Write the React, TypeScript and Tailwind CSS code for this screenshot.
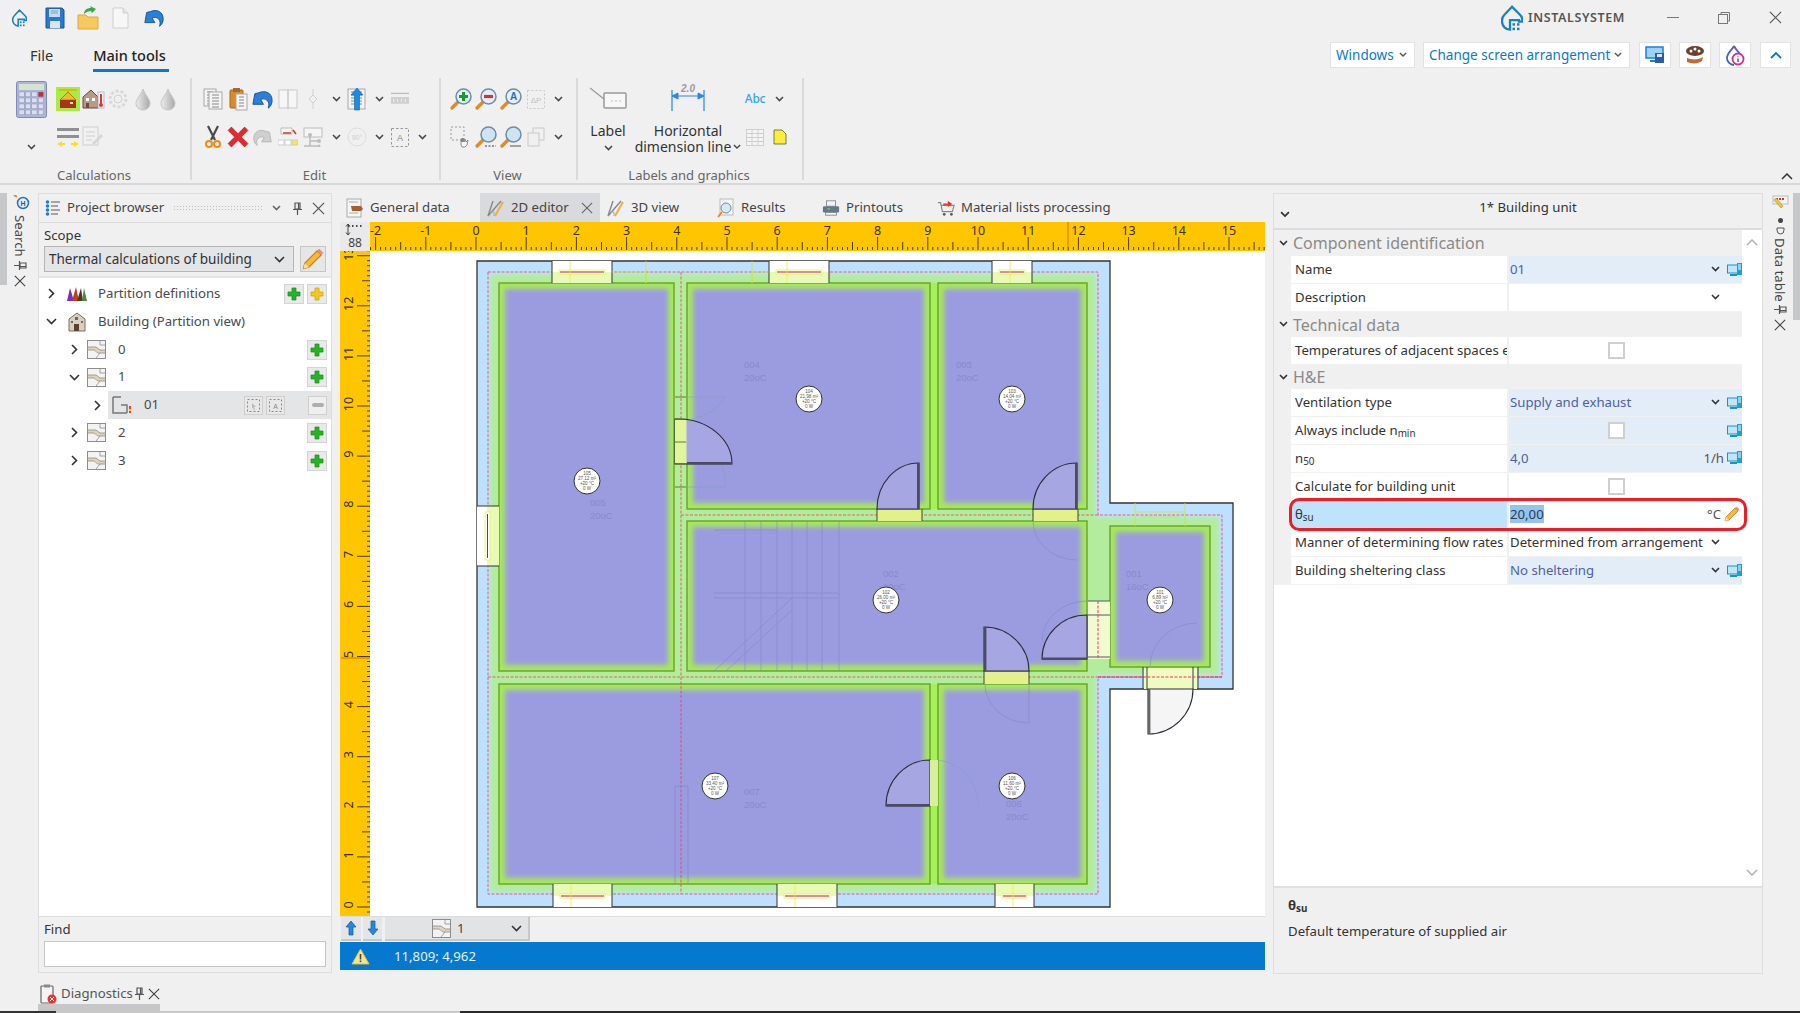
import React from "react";

const Chev = ({ c = "#4a4a4a", w = 9 }: { c?: string; w?: number }) => (
  <svg width={w} height={w * 0.67} viewBox="0 0 9 6" fill="none" className="shrink-0">
    <path d="M1 1l3.5 3.5L8 1" stroke={c} strokeWidth="1.6" />
  </svg>
);
const ChevR = () => (
  <svg width="7" height="11" viewBox="0 0 7 11" fill="none"><path d="M1 1l4.5 4.5L1 10" stroke="#333" strokeWidth="1.6" /></svg>
);
const ChevD = () => (
  <svg width="11" height="7" viewBox="0 0 11 7" fill="none"><path d="M1 1l4.5 4.5L10 1" stroke="#333" strokeWidth="1.6" /></svg>
);
const Cross = ({ s = 14, c = "#555" }: { s?: number; c?: string }) => (
  <svg width={s} height={s} viewBox="0 0 14 14" fill="none"><path d="M1 1l12 12M13 1L1 13" stroke={c} strokeWidth="1.3" /></svg>
);
const Pin = ({ r = false }: { r?: boolean }) => (
  <svg width="11" height="13" viewBox="0 0 11 13" fill="none" className={r ? "rotate-90" : ""}>
    <path d="M3 1h5v6H3zM1 7.5h9M5.5 8v5M6.5 1v6" stroke="#555" strokeWidth="1.2" />
  </svg>
);
const Drop = () => (
  <svg width="20" height="24" viewBox="0 0 20 24">
    <defs><linearGradient id="dg" x1="0" x2="1"><stop offset="0" stopColor="#ededed" /><stop offset="1" stopColor="#a8a8a8" /></linearGradient></defs>
    <path d="M10 2C8 8 3 12 3 16.5a7 6.5 0 0 0 14 0C17 12 12 8 10 2z" fill="url(#dg)" stroke="#c4c4c4" />
  </svg>
);
const Doc = ({ x = 0, y = 0, w = 14, h = 18, f = "#f4f4f4", s = "#a8a8a8" }: any) => (
  <g>
    <rect x={x} y={y} width={w} height={h} fill={f} stroke={s} />
    {[3, 6, 9, 12, 15].filter((l) => l < h - 1).map((l) => <path key={l} d={`M${x + 3} ${y + l}h${w - 6}`} stroke="#888" strokeWidth="1" />)}
  </g>
);
const I = ({ s = 24, children }: { s?: number; children: React.ReactNode }) => (
  <svg width={s} height={s} viewBox="0 0 24 24" fill="none" className="shrink-0">{children}</svg>
);
const Undo = ({ s = 24, flip = false, c = "#2a7fd6", d = "#14529c" }: any) => (
  <svg width={s} height={s} viewBox="0 0 24 24" fill="none" className={flip ? "-scale-x-100 shrink-0" : "shrink-0"}>
    <path d="M8 5c7-3 14 0 14 8 0 3-1 6-4 8 1-3 1-6-1-8-2-2-5-2-7-1l3 5H2L4 6z" fill={c} stroke={d} strokeWidth="1" />
  </svg>
);
const HomeDrop = ({ s = 22 }: { s?: number }) => (
  <svg width={s} height={s * 1.2} viewBox="0 0 22 26" fill="none" className="shrink-0">
    <path d="M11 1.5L3 10C1 12 1 14 1 16c0 5 4 8.5 8 8.5V15h9v1.5h3.5V16c0-2 0-4-2-6z" fill="none" stroke="#1a82c4" strokeWidth="2.3" />
    <rect x="11.5" y="18" width="2.5" height="2.5" fill="#1a82c4" /><rect x="16" y="18" width="2.5" height="2.5" fill="#1a82c4" />
    <rect x="11.5" y="22.5" width="2.5" height="2.5" fill="#1a82c4" /><rect x="16" y="22.5" width="2.5" height="2.5" fill="#1a82c4" />
  </svg>
);
const Plus = ({ c = "#27b327" }: { c?: string }) => (
  <div className="flex size-[20px] items-center justify-center border border-[#d4d4d4] bg-[#e9e9e9]">
    <svg width="14" height="14" viewBox="0 0 14 14"><path d="M5 1h4v4h4v4H9v4H5V9H1V5h4z" fill={c} stroke={c === "#27b327" ? "#178a17" : "#c9a200"} strokeWidth=".7" /></svg>
  </div>
);
const Floor = ({ s = 19 }: { s?: number }) => (
  <svg width={s} height={s} viewBox="0 0 19 19" className="shrink-0">
    <rect x=".5" y=".5" width="18" height="18" fill="#f3f3f3" stroke="#8d8d8d" />
    <path d="M1 7h8l4 3h5v3h-6l-4-3H1z" fill="#dfd3b4" />
    <path d="M1 7h8l4 3h5M1 10h6l4 3h7M13 1v4l5 0M9 18l4-5" stroke="#8d8d8d" fill="none" strokeWidth=".8" />
  </svg>
);
const Monitor = () => (
  <svg width="15" height="14" viewBox="0 0 15 14" className="shrink-0">
    <rect x=".5" y="2" width="11" height="8" fill="#bfe6f7" stroke="#1693c9" />
    <path d="M3 12h7" stroke="#1693c9" strokeWidth="2" />
    <rect x="10" y="0" width="5" height="12" fill="#1f9ed4" /><path d="M11 2h3M11 4h3M11 6h3" stroke="#fff" />
  </svg>
);
const Pencil = ({ s = 16 }: { s?: number }) => (
  <svg width={s} height={s} viewBox="0 0 16 16" className="shrink-0">
    <path d="M1 15l1-4L11 2l3 3-9 9z" fill="#f6b73c" stroke="#c47f17" strokeWidth=".8" />
    <path d="M11 2l1.5-1.5 3 3L14 5z" fill="#e98a8a" /><path d="M1 15l1-4 3 3z" fill="#f4dfb5" />
  </svg>
);
const Box = () => <div className="size-[17px] border-2 border-[#cfcfcf] bg-white" />;

const CalcIcon = () => (
  <svg width="31" height="37" viewBox="0 0 31 37" className="shrink-0">
    <rect x=".5" y=".5" width="30" height="36" rx="2" fill="#aeb6d8" stroke="#8189b4" />
    <rect x="3" y="3" width="25" height="6" fill="#d7e4cd" />
    {[0, 1, 2, 3].map((r) => [0, 1, 2, 3].map((c) => (
      <rect key={`${r}${c}`} x={3 + c * 6.4} y={11 + r * 6} width="5.2" height="4.8" fill={r === 0 && c === 3 ? "#c23030" : "#dadff0"} stroke="#7e86ad" strokeWidth=".4" />
    )))}
  </svg>
);

const Cell = ({ w = 25, children }: { w?: number; children?: React.ReactNode }) => (
  <div className="flex h-[26px] shrink-0 items-center justify-center" style={{ width: w }}>{children}</div>
);

const Mag = ({ kind }: { kind: "plus" | "minus" | "a" | "plain" | "sel" | "sel2" }) => (
  <I s={24}>
    <path d="M10 14l-7 7" stroke="#e08a28" strokeWidth="3.4" strokeLinecap="round" />
    <circle cx="14.5" cy="9.5" r="7.5" fill={kind === "plain" || kind === "sel" || kind === "sel2" ? "#cfe3f2" : "#e3eff6"} stroke="#6e8ca3" strokeWidth="1.5" />
    {kind === "plus" && <path d="M14.5 5v9M10 9.5h9" stroke="#1a9a2e" strokeWidth="3" />}
    {kind === "minus" && <path d="M10 9.5h9" stroke="#d03040" strokeWidth="3.2" />}
    {kind === "a" && <text x="14.5" y="13" textAnchor="middle" fontSize="10" fontWeight="700" fill="#2a6cc4" fontFamily="Liberation Sans">A</text>}
    {kind === "sel" && <path d="M11 21h11" stroke="#777" strokeWidth="1.3" strokeDasharray="2 1.5" />}
    {kind === "sel2" && <path d="M11 21h11" stroke="#888" strokeWidth="1.5" />}
  </I>
);

const ribbonG1 = (
  <div className="flex h-[64px] pl-4">
    <div className="flex w-[31px] flex-col items-center">
      <div className="-mt-[5px]"><CalcIcon /></div>
      <div className="mt-[26px]"><Chev /></div>
    </div>
    <div className="ml-[8px] flex flex-col gap-[12px]">
      <div className="flex">
        <Cell>
          <svg width="24" height="24" viewBox="0 0 24 24" className="bg-[#a9ea43]">
            <path d="M3 3h18M12 3v3" stroke="#d9b400" strokeWidth="1.5" /><path d="M4 13l8-8 8 8z" fill="#e7c02f" stroke="#b88000" />
            <rect x="4" y="13" width="16" height="8" fill="#a9321f" /><rect x="14" y="15" width="3" height="2" fill="#f4e1a0" />
          </svg>
        </Cell>
        <Cell>
          <I>
            <path d="M2 10l8-7 7 7v11H2z" fill="#b79b86" stroke="#5f4a3c" /><rect x="5" y="11" width="3" height="3" fill="#fff" /><rect x="11" y="11" width="3" height="3" fill="#fff" />
            <rect x="5" y="16" width="3" height="5" fill="#6f4a36" />
            <rect x="17" y="5" width="6" height="16" fill="#f2f4f8" stroke="#b4bac8" /><path d="M20 7v10" stroke="#d43a3a" strokeWidth="2" /><circle cx="20" cy="18" r="2" fill="#d43a3a" />
          </I>
        </Cell>
        <Cell>
          <I><circle cx="12" cy="12" r="8" fill="none" stroke="#d9d9d9" strokeWidth="3" strokeDasharray="3 2" /><circle cx="12" cy="12" r="4" fill="#efefef" stroke="#d0d0d0" /></I>
        </Cell>
        <Cell><Drop /></Cell>
        <Cell><Drop /></Cell>
      </div>
      <div className="flex">
        <Cell>
          <I>
            <rect x="1" y="3" width="22" height="3" fill="#909090" /><rect x="1" y="10" width="22" height="3" fill="#909090" />
            <path d="M1 19l5-3v2h3v2H6v2zM23 19l-5-3v2h-3v2h3v2z" fill="#f6e11d" />
          </I>
        </Cell>
        <Cell>
          <I><rect x="2" y="2" width="15" height="18" fill="#f1f1f1" stroke="#cfcfcf" /><path d="M5 7h9M5 11h9M5 15h6" stroke="#cfcfcf" /><path d="M11 18l9-9 2 2-9 9z" fill="#d6d6d6" /></I>
        </Cell>
      </div>
    </div>
  </div>
);

const Group = ({ w, label, children }: { w: number; label: string; children: React.ReactNode }) => (
  <div className="flex h-full shrink-0 flex-col pt-[14px]" style={{ width: w }}>
    {children}
    <div className="mt-[17px] h-4 pr-[2px] text-center text-[13px] leading-4 text-[#666]">{label}</div>
  </div>
);
const Sep = () => <div className="mt-[6px] h-[102px] w-[2px] shrink-0 bg-[#dadada]" />;

const ribbonG2 = (
  <div className="flex h-[64px] flex-col gap-[12px] pl-2">
    <div className="flex">
      <Cell><svg width="20" height="22" viewBox="0 0 20 22"><Doc x={1} y={1} w={12} h={17} /><Doc x={6} y={4} w={13} h={17} /></svg></Cell>
      <Cell><svg width="20" height="24" viewBox="0 0 20 24"><rect x="2" y="3" width="13" height="18" rx="1" fill="#d88a2c" stroke="#a9651a" /><rect x="5" y="1" width="7" height="4" fill="#9a6a3a" /><Doc x={8} y={7} w={11} h={16} /></svg></Cell>
      <Cell><Undo s={23} /></Cell>
      <Cell><svg width="20" height="20" viewBox="0 0 20 20"><rect x="1" y="1" width="18" height="18" fill="#f6f6f6" stroke="#c9c9c9" /><path d="M10 0v20" stroke="#c9c9c9" strokeWidth="1.5" /></svg></Cell>
      <Cell><svg width="12" height="20" viewBox="0 0 12 20"><path d="M6 0v6M6 14v6" stroke="#d0d0d0" /><path d="M6 6l4 4-4 4-4-4z" fill="none" stroke="#d0d0d0" /></svg></Cell>
      <Cell w={22}><Chev /></Cell>
      <Cell w={20}>
        <svg width="20" height="24" viewBox="0 0 20 24"><Doc x={1} y={2} w={17} h={20} /><path d="M10 1l6 7h-3.5v15h-5V8H4z" fill="#1b8de0" stroke="#0f62ab" strokeWidth=".6" /></svg>
      </Cell>
      <Cell w={24}><Chev /></Cell>
      <Cell w={18}><svg width="19" height="14" viewBox="0 0 19 14"><path d="M0 1h19" stroke="#aaa" /><rect x="0" y="5" width="19" height="7" fill="#cfcfcf" /><path d="M3 7v3M7 7v3M11 7v3M15 7v3" stroke="#f5f5f5" /></svg></Cell>
    </div>
    <div className="flex">
      <Cell>
        <svg width="16" height="24" viewBox="0 0 16 24" fill="none"><path d="M3 1l7 14M13 1L6 15" stroke="#4a4a4a" strokeWidth="2.2" /><circle cx="4" cy="19" r="3" stroke="#ee8a12" strokeWidth="2" /><circle cx="12" cy="19" r="3" stroke="#ee8a12" strokeWidth="2" /></svg>
      </Cell>
      <Cell><svg width="22" height="22" viewBox="0 0 20 20"><path d="M1 4l3-3 6 6 6-6 3 3-6 6 6 6-3 3-6-6-6 6-3-3 6-6z" fill="#e02b33" stroke="#a81a1f" strokeWidth=".6" /></svg></Cell>
      <Cell><Undo s={21} flip c="#cfcfcf" d="#b5b5b5" /></Cell>
      <Cell>
        <svg width="20" height="20" viewBox="0 0 20 20"><path d="M3 1h11v6H3z" fill="#f4f4f4" stroke="#bbb" /><path d="M5 6h8" stroke="#d03a2a" strokeWidth="1.5" /><path d="M15 3l3 4" stroke="#d03a2a" strokeWidth="1.5" />
          <rect x="0" y="13" width="6" height="5" fill="#fff" stroke="#ccc" /><rect x="7" y="13" width="6" height="5" fill="#fff" stroke="#ccc" /><rect x="14" y="13" width="6" height="5" fill="#f6e454" stroke="#ccc" /></svg>
      </Cell>
      <Cell>
        <svg width="20" height="20" viewBox="0 0 20 20" fill="none"><rect x="1" y="1" width="18" height="9" fill="#f5f5f5" stroke="#bcbcbc" /><path d="M7 8v11M1 19h15M7 14h9" stroke="#bcbcbc" strokeWidth="1.5" /><circle cx="7" cy="8" r="2" fill="#bcbcbc" /><circle cx="16" cy="14" r="2" fill="#bcbcbc" /><circle cx="16" cy="19" r="1.5" fill="#bcbcbc" /></svg>
      </Cell>
      <Cell w={22}><Chev /></Cell>
      <Cell w={20}>
        <svg width="20" height="20" viewBox="0 0 20 20"><circle cx="10" cy="10" r="9" fill="none" stroke="#ddd" /><text x="10" y="13" textAnchor="middle" fontSize="7" fill="#cfcfcf" fontFamily="Liberation Sans">90°</text></svg>
      </Cell>
      <Cell w={24}><Chev /></Cell>
      <Cell w={18}>
        <svg width="18" height="19" viewBox="0 0 18 19"><rect x=".5" y=".5" width="17" height="18" fill="none" stroke="#999" strokeDasharray="2.5 2" /><text x="9" y="13" textAnchor="middle" fontSize="9" fill="#888" fontFamily="Liberation Sans">A</text></svg>
      </Cell>
      <Cell w={26}><Chev /></Cell>
    </div>
  </div>
);

const ribbonG3 = (
  <div className="flex h-[64px] flex-col gap-[12px] pl-[7px]">
    <div className="flex">
      <Cell><Mag kind="plus" /></Cell>
      <Cell><Mag kind="minus" /></Cell>
      <Cell><Mag kind="a" /></Cell>
      <Cell><svg width="18" height="19" viewBox="0 0 18 19"><rect x=".5" y=".5" width="17" height="18" fill="none" stroke="#c8c8c8" strokeDasharray="2 2" /><text x="9" y="13" textAnchor="middle" fontSize="8" fill="#c0c0c0" fontFamily="Liberation Sans">ΔP</text></svg></Cell>
      <Cell w={20}><Chev /></Cell>
    </div>
    <div className="flex">
      <Cell>
        <svg width="22" height="22" viewBox="0 0 22 22" fill="none"><rect x="1" y="1" width="13" height="13" stroke="#999" strokeDasharray="2 2" /><path d="M11 19v-6l1 3v-4l1 4v-4l1 4 1-3 1 3 2-2-1 5-2 2h-3z" fill="#f4f4f4" stroke="#777" strokeWidth=".8" /></svg>
      </Cell>
      <Cell><Mag kind="sel" /></Cell>
      <Cell><Mag kind="sel2" /></Cell>
      <Cell><svg width="18" height="20" viewBox="0 0 18 20" fill="none"><rect x="6" y="1" width="11" height="12" stroke="#c8c8c8" /><rect x="1" y="6" width="11" height="13" fill="#f0f0f0" stroke="#c8c8c8" /></svg></Cell>
      <Cell w={20}><Chev /></Cell>
    </div>
  </div>
);

const ribbonG4 = (
  <div className="flex h-[64px] pl-[10px]">
    <div className="flex w-[40px] flex-col items-center">
      <Cell w={40}>
        <svg width="37" height="24" viewBox="0 0 37 24" fill="none"><path d="M0 1l14 11" stroke="#999" strokeWidth="1.3" /><rect x="14" y="6" width="22" height="15" rx="1" fill="#f7f7f7" stroke="#999" strokeWidth="1.5" /><path d="M21 14h2M25 14h2M29 14h2" stroke="#bbb" /></svg>
      </Cell>
      <div className="mt-[11px] h-4 text-[14px] leading-4 text-[#333]">Label</div>
      <div className="mt-[6px]"><Chev /></div>
    </div>
    <div className="ml-[5px] flex w-[110px] flex-col items-center">
      <Cell w={110}>
        <svg width="34" height="28" viewBox="0 0 34 28" fill="none" className="-mt-[2px]">
          <path d="M1 6v21M33 6v21" stroke="#4a9af0" strokeWidth="1.5" /><path d="M1 12h32M1 12l6-3v6zM33 12l-6-3v6z" stroke="#2c86ea" fill="#2c86ea" />
          <text x="17" y="8" textAnchor="middle" fontSize="10" fontStyle="italic" fontWeight="700" fill="#9a9a9a" fontFamily="Liberation Sans">2.0</text>
        </svg>
      </Cell>
      <div className="mt-[11px] h-4 text-[14px] leading-4 text-[#333]">Horizontal</div>
      <div className="flex h-4 items-center whitespace-nowrap text-[14px] leading-4 text-[#333]">dimension line<span className="ml-[2px]"><Chev w={8} /></span></div>
    </div>
    <div className="flex flex-col gap-[12px]">
      <div className="flex">
        <Cell w={24}><span className="text-[12px] font-medium tracking-tight text-[#35a4f0]">Abc</span></Cell>
        <Cell w={24}><Chev /></Cell>
      </div>
      <div className="flex">
        <Cell w={24}><svg width="18" height="17" viewBox="0 0 18 17" fill="none"><rect x=".5" y=".5" width="17" height="16" fill="#f4f4f4" stroke="#cfcfcf" /><path d="M1 4.5h16M1 8.5h16M1 12.5h16M6 1v15M12 1v15" stroke="#cfcfcf" /></svg></Cell>
        <Cell w={26}><svg width="14" height="16" viewBox="0 0 14 16"><path d="M1 1h8l4 4v10H1z" fill="#f9ee3c" stroke="#5a5a3a" strokeWidth=".8" /></svg></Cell>
      </div>
    </div>
  </div>
);

const TreeRow = ({ indent, exp, icon, text, right, selected = false, w }: any) => (
  <div className="flex h-[27.8px] items-center">
    <div className="flex w-[25px] shrink-0 items-center justify-center" style={{ marginLeft: indent }}>{exp ? <ChevD /> : <ChevR />}</div>
    <div className={`flex h-[28px] flex-1 items-center ${selected ? "-ml-[2px] bg-[#e4e5e7] pl-[4px]" : ""}`}>
      {icon}
      <div className="whitespace-nowrap text-[13.2px] text-[#4a4a4a]" style={{ marginLeft: w }}>{text}</div>
      <div className="ml-auto flex items-center gap-[3px] pr-[4px]">{right}</div>
    </div>
  </div>
);

const Section = ({ t, h = 24 }: { t: string; h?: number }) => (
  <div className="flex items-center bg-[#f0f0f0]" style={{ height: h }}>
    <div className="flex w-[19px] justify-center"><Chev c="#333" /></div>
    <div className="text-[16px] leading-none text-[#8a8a8a]">{t}</div>
  </div>
);
const PRow = ({ label, value, blue = false, chev = false, mon = false, box = false, unit, hi = false, labelHi = false }: any) => (
  <div className="flex h-[28px] bg-[#f0f0f0] pb-px">
    <div className="w-[17px] shrink-0" />
    <div className={`flex w-[216px] shrink-0 items-center overflow-hidden whitespace-nowrap pl-1 text-[13.2px] text-[#333] ${labelHi ? "bg-[#bfe3fa]" : "bg-white"}`}>{label}</div>
    <div className={`relative ml-[2px] flex flex-1 items-center whitespace-nowrap text-[13.2px] ${blue ? "bg-[#e3edf8]" : "bg-white"}`}>
      <span className={`pl-px ${blue ? "text-[#4c5fa8]" : "text-[#333]"}`}>{value}</span>
      {box && <div className="absolute left-[99px] top-[5px]"><Box /></div>}
      <div className="ml-auto flex items-center">
        {unit && <span className="mr-[3px] text-[#555]">{unit}</span>}
        {chev && <span className="mr-[7px]"><Chev c="#333" /></span>}
        {hi && <span className="mr-[2px]"><Pencil /></span>}
        {mon ? <Monitor /> : !hi && <span className="w-[15px]" />}
      </div>
    </div>
  </div>
);

const Tab = ({ w, pl, icon, text, active = false, close = false }: any) => (
  <div className={`flex h-full shrink-0 items-center ${active ? "bg-[#d9dadd]" : ""}`} style={{ width: w, paddingLeft: pl }}>
    <span className="mr-[6px] flex w-[18px] justify-center">{icon}</span>
    <span className="whitespace-nowrap text-[13.2px] text-[#444]">{text}</span>
    {close && <span className="ml-[12px]"><Cross s={12} c="#666" /></span>}
  </div>
);
const Pen2D = ({ c = "#888" }: { c?: string }) => (
  <svg width="18" height="18" viewBox="0 0 18 18" fill="none"><path d="M1 17l5-15M1 17L14 2" stroke={c} strokeWidth="1.4" /><path d="M8 17L16 3" stroke="#e8b04a" strokeWidth="2" /><path d="M1 13h6v4" stroke="#aaa" /></svg>
);

const Ruler = () => {
  const ticks: React.ReactNode[] = [];
  for (let i = -21; i <= 158; i++) {
    const x = 476 + i * 5.02;
    const len = i % 10 === 0 ? 13 : i % 5 === 0 ? 8 : 3;
    ticks.push(<path key={i} d={`M${x} 250V${250 - len}`} stroke="#4a3c00" strokeWidth="1" />);
  }
  return (
    <svg width="895" height="29" viewBox="370 222 895 29" className="block shrink-0">
      {ticks}
      {Array.from({ length: 18 }, (_, k) => k - 2).map((n) => (
        <text key={n} x={476 + n * 50.2} y="235" textAnchor="middle" fontSize="12.5" fill="#3d3000" fontFamily="Noto Sans, sans-serif">{n < 0 ? `-${-n}` : n}</text>
      ))}
      <path d="M1068 222V251" stroke="#d96a00" />
    </svg>
  );
};
const VRuler = () => {
  const ticks: React.ReactNode[] = [];
  for (let i = -2; i <= 132; i++) {
    const y = 907 - i * 5.01;
    const len = i % 10 === 0 ? 13 : i % 5 === 0 ? 8 : 3;
    ticks.push(<path key={i} d={`M29 ${y}H${29 - len}`} stroke="#4a3c00" strokeWidth="1" />);
  }
  return (
    <svg width="29" height="665" viewBox="0 251 29 665" className="block">
      {ticks}
      {Array.from({ length: 14 }, (_, k) => k).map((n) => (
        <text key={n} x={9} y={907 - n * 50.1 - 2} transform={`rotate(-90 9 ${907 - n * 50.1 - 2})`} textAnchor="middle" dominantBaseline="middle" fontSize="12.5" fill="#3d3000" fontFamily="Noto Sans, sans-serif">{n}</text>
      ))}
      <path d="M0 658H29" stroke="#d96a00" />
    </svg>
  );
};

const Room = ({ x, y, w, h }: { x: number; y: number; w: number; h: number }) => (
  <g>
    <rect x={x} y={y} width={w} height={h} fill="#a6e85c" />
    <rect x={x + 6} y={y + 6} width={w - 12} height={h - 12} fill="#9b9be0" filter="url(#blur)" />
    <rect x={x} y={y} width={w} height={h} fill="none" stroke="#6ea52c" strokeWidth="1.5" />
  </g>
);
const Circle = ({ x, y, l }: { x: number; y: number; l: string[] }) => (
  <g>
    <circle cx={x} cy={y} r="13" fill="#fff" stroke="#333" strokeWidth="1" />
    {l.map((t, i) => (
      <text key={i} x={x} y={y - 6.5 + i * 5.2} textAnchor="middle" fontSize="4.6" fill="#555" fontFamily="Liberation Sans, sans-serif">{t}</text>
    ))}
  </g>
);
const RoomLabel = ({ x, y, a, b }: { x: number; y: number; a: string; b: string }) => (
  <g fontSize="9.5" fill="#8a8ac9" fontFamily="Liberation Sans, sans-serif">
    <text x={x} y={y}>{a}</text><text x={x} y={y + 12.5}>{b}</text>
  </g>
);
const WinH = ({ a, b, y1, y2, top = true }: { a: number; b: number; y1: number; y2: number; top?: boolean }) => {
  const m = top ? y1 + 11 : y2 - 11;
  return (
    <g>
      <rect x={a} y={y1} width={b - a} height={y2 - y1} fill="#fff" />
      <rect x={a} y={top ? m : y1} width={b - a} height={top ? y2 - m : m - y1} fill="#e9fab8" />
      <rect x={a + 7} y={m - 2} width={b - a - 14} height="4" fill="#fff" stroke="#e7e84a" strokeWidth=".7" />
      <path d={`M${a + 8} ${m}H${b - 8}`} stroke="#b0202a" strokeWidth="1" />
      <path d={`M${a} ${y1}V${y2}M${b} ${y1}V${y2}`} stroke="#333" strokeWidth="1" />
      <path d={`M${a + 18} ${y1}V${y2}`} stroke="#ecec40" strokeWidth=".8" />
    </g>
  );
};
const DoorFill = "#a6a6e2";

const Plan = () => (
  <svg width="895" height="665" viewBox="370 251 895 665" className="absolute left-0 top-0">
    <defs>
      <filter id="blur" x="-10%" y="-10%" width="120%" height="120%"><feGaussianBlur stdDeviation="2.6" /></filter>
      <filter id="blur2" x="-5%" y="-5%" width="110%" height="110%"><feGaussianBlur stdDeviation="2" /></filter>
    </defs>
    <path d="M477 261H1110V503H1233V689H1110V907H477Z" fill="#bfdfff" stroke="#333" strokeWidth="1.3" />
    <path d="M490 274H1096V517H1219V675H1096V892H490Z" fill="#b4ec9e" filter="url(#blur2)" />

    <rect x="928" y="283" width="12" height="226" fill="#a6f05a" />
    <rect x="928" y="684" width="12" height="200" fill="#a6f05a" />
    <Room x={499} y={283} w={175} h={388} />
    <Room x={687} y={283} w={243} h={226} />
    <Room x={938} y={283} w={149} h={226} />
    <Room x={687} y={521} w={400} h={150} />
    <Room x={1110} y={526} w={100} h={141} />
    <Room x={499} y={684} w={431} h={200} />
    <Room x={938} y={684} w={149} h={200} />

    {/* red dashed axis lines */}
    <g fill="none" stroke="#e23a64" strokeWidth="1" strokeDasharray="3 1.5" opacity=".75">
      <path d="M488 272H1098V515H1222V677H1098V894H488Z" />
      <path d="M681 272V894M681 515H1098M488 677H1222" />
    </g>

    {/* stairs and faint details */}
    <g stroke="#8585c8" strokeWidth=".8" fill="none" opacity=".75">
      <path d="M714 530H777M714 593H839M714 598H839M745 521V671M761 521V671M777 521V671M792 521V671M807 521V671M822 521V671M839 521V671" />
      <path d="M714 671L792 598M726 671L792 610" />
      <path d="M675 786h13v98M675 786v98" />
      <path d="M1033 521A44 39 0 0 0 1077 560M985 684A44 39 0 0 0 1029 723V684M1197 623A47 44 0 0 0 1150 666" />
      <path d="M1042 640A45 40 0 0 1 1087 601" />
    </g>
    <g stroke="#7fa0b8" strokeWidth=".8" fill="none" opacity=".7">
      <path d="M687 397H725A50 42 0 0 1 692 419M725 487A50 42 0 0 0 692 442M725 487H687" />
      <path d="M938 760A44 46 0 0 1 978 806" />
    </g>

    {/* windows */}
    <WinH a={552} b={612} y1={261} y2={283} />
    <WinH a={769} b={829} y1={261} y2={283} />
    <WinH a={992} b={1032} y1={261} y2={283} />
    <WinH a={553} b={612} y1={884} y2={907} top={false} />
    <WinH a={777} b={837} y1={884} y2={907} top={false} />
    <WinH a={995} b={1034} y1={884} y2={907} top={false} />
    <g>
      <rect x="477" y="506" width="22" height="60" fill="#fff" />
      <rect x="487" y="506" width="12" height="60" fill="#e9fab8" />
      <path d="M477 506H499M477 566H499" stroke="#333" />
      <rect x="485" y="512" width="5" height="48" fill="#fff" stroke="#e7e84a" strokeWidth=".7" />
      <path d="M487.5 514V558" stroke="#b0202a" />
    </g>
    <g stroke="#c6e63c" strokeWidth=".8" fill="none">
      <path d="M1135 503V526M1185 503V526M1135 512H1185M1140 517H1180" />
      <path d="M612 272H646V283M646 261V283M769 272H752V283M752 261V283" />
    </g>

    {/* doors */}
    <g>
      <path d="M675 419H678A54 45 0 0 1 732 464H675Z" fill={DoorFill} stroke="#2d2d3c" strokeWidth="1.1" />
      <rect x="675" y="420" width="11.500" height="43" fill="#e0f59e" />
      <path d="M675 397H686M675 419H686M675 442H686M675 464H686M675 487H686" stroke="#5b7d2e" />
      <rect x="687" y="462" width="45" height="2.4" fill="#4b4b66" />

      <rect x="877" y="510" width="45" height="11" fill="#e4f08c" />
      <path d="M877 509V521M922 509V521" stroke="#3b4b2a" />
      <path d="M919 463A42 46 0 0 0 877 509H919Z" fill={DoorFill} stroke="#2d2d3c" strokeWidth="1.1" />
      <rect x="917" y="463" width="2.4" height="46" fill="#4b4b66" />

      <rect x="1033" y="510" width="45" height="11" fill="#e4f08c" />
      <path d="M1033 509V521M1078 509V521" stroke="#3b4b2a" />
      <path d="M1077 463A44 46 0 0 0 1033 509H1077Z" fill={DoorFill} stroke="#2d2d3c" strokeWidth="1.1" />
      <rect x="1075" y="463" width="2.4" height="46" fill="#4b4b66" />

      <rect x="984" y="672" width="45" height="12" fill="#e4f08c" />
      <path d="M984 671V684M1029 671V684" stroke="#3b4b2a" />
      <path d="M984 627A45 44 0 0 1 1029 671H984Z" fill={DoorFill} stroke="#2d2d3c" strokeWidth="1.1" />
      <rect x="984" y="627" width="2.4" height="44" fill="#4b4b66" />

      <rect x="1088" y="601" width="22" height="58" fill="#f2fbcf" />
      <path d="M1088 601H1110M1088 615H1110M1088 657H1110" stroke="#445" strokeWidth=".9" />
      <path d="M1042 659A45 44 0 0 1 1087 615V659Z" fill={DoorFill} stroke="#2d2d3c" strokeWidth="1.1" />
      <rect x="1042" y="657.5" width="45" height="2.4" fill="#4b4b66" />
      <path d="M1098 601V659" stroke="#e23a64" strokeDasharray="3 1.5" />

      <rect x="1144" y="668" width="53" height="21" fill="#f0fbc0" />
      <rect x="1147" y="689" width="46" height="1" fill="#333" />
      <path d="M1143 667V689M1147 667V689M1193 667V689M1198 667V689" stroke="#2a3d55" />
      <path d="M1148 689V734A45 45 0 0 0 1193 689Z" fill="#f6f5f6" stroke="#2d2d3c" strokeWidth="1.1" />
      <rect x="1148" y="689" width="2.4" height="45" fill="#666" />
      <path d="M1098 677H1222" stroke="#e23a64" strokeDasharray="3 1.5" />

      <path d="M930 760A44 46 0 0 0 886 806H930Z" fill={DoorFill} stroke="#2d2d3c" strokeWidth="1.1" />
      <rect x="930" y="760" width="8" height="46" fill="#d8f09a" />
      <rect x="886" y="804" width="44" height="2.4" fill="#4b4b66" />
    </g>

    <RoomLabel x={590} y={506} a="005" b="20oC" />
    <RoomLabel x={744} y={368} a="004" b="20oC" />
    <RoomLabel x={956} y={368} a="003" b="20oC" />
    <RoomLabel x={883} y={577} a="002" b="20oC" />
    <RoomLabel x={1126} y={577} a="001" b="16oC" />
    <RoomLabel x={744} y={795} a="007" b="20oC" />
    <RoomLabel x={1006} y={807} a="006" b="20oC" />

    <Circle x={587} y={481} l={["105", "27,12 m²", "+20 °C", "0 W"]} />
    <Circle x={809} y={399} l={["104", "21,98 m²", "+20 °C", "0 W"]} />
    <Circle x={1012} y={399} l={["103", "14,04 m²", "+20 °C", "0 W"]} />
    <Circle x={886} y={600} l={["102", "26,00 m²", "+20 °C", "0 W"]} />
    <Circle x={1160} y={600} l={["101", "6,89 m²", "+20 °C", "0 W"]} />
    <Circle x={715} y={786} l={["107", "33,40 m²", "+20 °C", "0 W"]} />
    <Circle x={1012} y={786} l={["106", "11,60 m²", "+20 °C", "0 W"]} />
  </svg>
);

export default function App() {
  return (
    <div className="flex h-[1013px] w-[1800px] flex-col overflow-hidden bg-[#f0f0f0] font-['Noto_Sans',sans-serif] text-[#333]">
      {/* Quick access */}
      <div className="flex h-[36px] shrink-0 items-center">
        <div className="flex w-[172px] items-center">
          <div className="flex w-[38px] justify-center"><HomeDrop s={15} /></div>
          <div className="flex w-[33px] justify-center">
            <svg width="20" height="22" viewBox="0 0 20 22"><path d="M1 1h16l2 2v18H1z" fill="#2a78d2" stroke="#1b4f9a" /><rect x="4" y="2" width="11" height="8" fill="#c9dbf2" /><path d="M6 4h7M6 6h7" stroke="#7a9cc8" /><rect x="5" y="14" width="10" height="7" fill="#dfe3ea" /></svg>
          </div>
          <div className="flex w-[33px] justify-center">
            <svg width="22" height="24" viewBox="0 0 22 24"><path d="M1 9h8l2 2h10v12H1z" fill="#f6c95c" stroke="#dca83a" /><path d="M7 8c0-4 3-6 7-6l-1-2 6 3-4 4-1-2c-2 0-5 1-7 3z" fill="#3aaa4a" /></svg>
          </div>
          <div className="flex w-[33px] justify-center">
            <svg width="17" height="22" viewBox="0 0 17 22"><path d="M1 1h10l5 5v15H1z" fill="#f7f7f7" stroke="#cfcfcf" /><path d="M11 1v5h5" fill="#e5e5e5" stroke="#cfcfcf" /></svg>
          </div>
          <div className="flex w-[33px] justify-center"><Undo s={22} /></div>
        </div>
        <div className="ml-auto flex items-center">
          <HomeDrop s={22} />
          <span className="ml-[5px] w-[96px] whitespace-nowrap text-[12.5px] font-semibold tracking-[0.6px] text-[#555]">INSTALSYSTEM</span>
          <div className="ml-[43px] h-px w-[12px] bg-[#777]" />
          <svg width="12" height="12" viewBox="0 0 12 12" fill="none" className="ml-[39px]"><rect x=".5" y="2.5" width="9" height="9" stroke="#777" /><path d="M3 2.5V.5h8.5V9H9.5" stroke="#777" /></svg>
          <span className="ml-[39px] mr-[18px]"><Cross s={13} /></span>
        </div>
      </div>

      {/* Menu tabs */}
      <div className="flex h-[36px] shrink-0 items-start">
        <div className="ml-[30px] pt-[9px] text-[14.5px] leading-5 text-[#333]">File</div>
        <div className="ml-[40px] flex h-[36px] flex-col justify-between pt-[9px]">
          <div className="w-[76px] whitespace-nowrap text-[14.5px] font-medium leading-5 text-[#222]">Main tools</div>
          <div className="h-[3px] w-[76px] bg-[#0a78d0]" />
        </div>
        <div className="ml-auto flex items-center pt-[6px] text-[13.5px] text-[#0a78d0]">
          <div className="flex h-[26px] w-[85px] items-center justify-between border border-[#e2e2e2] bg-white pl-[5px] pr-[7px]">Windows<Chev c="#555" w={8} /></div>
          <div className="ml-[8px] flex h-[26px] w-[207px] items-center justify-between whitespace-nowrap border border-[#e2e2e2] bg-white pl-[5px] pr-[7px]">Change screen arrangement<Chev c="#555" w={8} /></div>
          <div className="ml-[9px] flex h-[26px] w-[32px] items-center justify-center border border-[#e2e2e2] bg-white">
            <svg width="20" height="18" viewBox="0 0 20 18"><rect x="1" y="1" width="17" height="11" fill="#9fd0f5" stroke="#1f7fd0" strokeWidth="1.5" /><path d="M5 15h8" stroke="#1f7fd0" strokeWidth="2" /><rect x="10" y="7" width="9" height="10" fill="#2a5ca8" /><rect x="12" y="8" width="5" height="3" fill="#dbe7f7" /></svg>
          </div>
          <div className="ml-[8px] flex h-[26px] w-[32px] items-center justify-center border border-[#e2e2e2] bg-white">
            <svg width="20" height="20" viewBox="0 0 20 20"><ellipse cx="10" cy="6" rx="9" ry="5" fill="#6a4030" /><circle cx="6" cy="6" r="1.5" fill="#fff" /><circle cx="10" cy="4" r="1.5" fill="#fff" /><circle cx="14" cy="6" r="1.5" fill="#fff" /><path d="M2 13c5 2 12 2 16-1l-1 4c-4 3-10 3-15 1z" fill="#c46a2a" /></svg>
          </div>
          <div className="ml-[8px] flex h-[26px] w-[32px] items-center justify-center border border-[#e2e2e2] bg-white">
            <svg width="20" height="22" viewBox="0 0 20 22" fill="none"><path d="M9 2C7 6 2 9 2 14a7 7 0 0 0 7 7" stroke="#3e63c4" strokeWidth="1.8" /><path d="M9 2c2 4 4 5 6 8" stroke="#7a4cc4" strokeWidth="1.8" /><circle cx="13" cy="15" r="5.5" fill="#fff" stroke="#d0308c" strokeWidth="1.8" /><path d="M13 12.5v.8M13 14.5v3.5" stroke="#d0308c" strokeWidth="1.6" /></svg>
          </div>
          <div className="ml-[9px] mr-[9px] flex h-[26px] w-[31px] items-center justify-center border border-[#e2e2e2] bg-white">
            <svg width="12" height="7" viewBox="0 0 12 7" fill="none"><path d="M1 6l5-5 5 5" stroke="#0a78d0" strokeWidth="1.8" /></svg>
          </div>
        </div>
      </div>

      {/* Ribbon */}
      <div className="flex h-[113px] shrink-0 border-b-2 border-[#d8d8d8]">
        <Group w={190} label="Calculations">{ribbonG1}</Group>
        <Sep />
        <Group w={247} label="Edit">{ribbonG2}</Group>
        <Sep />
        <Group w={135} label="View">{ribbonG3}</Group>
        <Sep />
        <Group w={224} label="Labels and graphics">{ribbonG4}</Group>
        <Sep />
        <div className="ml-auto mr-[7px] self-end pb-[3px]">
          <svg width="12" height="7" viewBox="0 0 12 7" fill="none"><path d="M1 6l5-5 5 5" stroke="#333" strokeWidth="1.5" /></svg>
        </div>
      </div>

      {/* Main */}
      <div className="flex h-[826px] shrink-0 pt-[8px]">
        {/* Left tool strip */}
        <div className="flex w-[38px] shrink-0">
          <div className="h-[92px] w-[7px] bg-[#c6c7c9]" />
          <div className="ml-[3px] flex w-[20px] flex-col items-center">
            <svg width="17" height="16" viewBox="0 0 17 16" fill="none" className="ml-[3px] mt-[2px]"><circle cx="10" cy="8" r="5.5" fill="#e2effa" stroke="#2a6fb8" strokeWidth="1.5" /><path d="M4 2L1 0" stroke="#e08a28" strokeWidth="2" /><text x="10" y="10.5" textAnchor="middle" fontSize="7" fontWeight="700" fill="#1c5a9e" fontFamily="Liberation Sans">H</text></svg>
            <div className="mt-[4px] text-[13.2px] leading-[16px] text-[#444] [writing-mode:vertical-rl]">Search</div>
            <div className="mt-[2px]"><Pin r /></div>
            <div className="mt-[3px]"><Cross s={12} c="#444" /></div>
          </div>
        </div>

        {/* Project browser column */}
        <div className="flex w-[294px] shrink-0 flex-col">
          <div className="flex h-[780px] flex-col border border-[#dedede]">
            <div className="flex h-[29px] shrink-0 items-center border-b border-[#dcdcdc] pl-[6px]">
              <svg width="16" height="16" viewBox="0 0 16 16" className="shrink-0"><g fill="#2a78c8"><circle cx="2.5" cy="2" r="1.8" /><circle cx="2.5" cy="6" r="1.8" /><circle cx="2.5" cy="10" r="1.8" /><circle cx="2.5" cy="14" r="1.8" /></g><path d="M6 2h9M6 6h7M6 10h9M6 14h7" stroke="#8a8a8a" strokeWidth="1.3" /></svg>
              <span className="ml-[6px] w-[100px] shrink-0 whitespace-nowrap text-[13.2px] text-[#444]">Project browser</span>
              <div className="ml-[6px] h-[6px] w-[89px] shrink-0 bg-[radial-gradient(#bdbdbd_0.7px,transparent_0.8px)] bg-[length:3px_3px]" />
              <span className="ml-[10px]"><Chev c="#666" /></span>
              <span className="ml-[11px]"><Pin /></span>
              <span className="ml-[9px]"><Cross s={13} /></span>
            </div>
            <div className="flex h-[55px] shrink-0 flex-col border-b-2 border-[#e4e4e4] px-[5px]">
              <div className="h-[23px] pt-[2px] text-[13.2px] leading-[20px] text-[#333]">Scope</div>
              <div className="flex gap-[6px]">
                <div className="flex h-[26px] w-[250px] items-center justify-between whitespace-nowrap border border-[#b5b5b5] bg-[#e4e5e7] pl-[4px] pr-[8px] text-[13.5px] text-[#333]">Thermal calculations of building<ChevD /></div>
                <div className="flex h-[26px] w-[26px] items-center justify-center border border-[#c6c6c6] bg-[#e6e6e6]"><Pencil s={22} /></div>
              </div>
            </div>
            <div className="flex-1 bg-white pt-[2px]">
              <TreeRow indent={0} icon={<svg width="20" height="16" viewBox="0 0 20 16" className="ml-[3px] shrink-0"><path d="M0 15L3 2l4 13z" fill="#7a2fb8" /><path d="M5 15L9 1l3 14z" fill="#b8431f" /><path d="M10 15L14 2l2 13z" fill="#5a3020" /><path d="M15 15l2-13 3 13z" fill="#4a8a3a" /></svg>} w={11} text="Partition definitions" right={<><Plus /><Plus c="#f3c81f" /></>} />
              <TreeRow indent={0} exp icon={<svg width="20" height="20" viewBox="0 0 20 20" className="ml-[3px] shrink-0"><path d="M2 7l8-6 8 6v12H2z" fill="#d8cfc2" stroke="#7d6d5b" /><rect x="7" y="12" width="5" height="7" fill="#5a4030" /><path d="M4 9h2v2H4zM14 9h2v2h-2zM8 5h3v3H8z" fill="#6a6a6a" /></svg>} w={11} text="Building (Partition view)" />
              <TreeRow indent={23} icon={<Floor />} w={12} text="0" right={<Plus />} />
              <TreeRow indent={23} exp icon={<Floor />} w={12} text="1" right={<Plus />} />
              <TreeRow indent={46} selected icon={<svg width="20" height="18" viewBox="0 0 20 18" className="shrink-0" fill="none"><path d="M1 1h8M1 1v16h14M15 17V9H9" stroke="#777" strokeWidth="1.5" /><path d="M18 10v7" stroke="#e2412d" strokeWidth="2" /><path d="M18 13v2" stroke="#e7d42b" strokeWidth="2" /></svg>} w={12} text="01"
                right={<>
                  <div className="flex size-[19px] items-center justify-center border border-[#cfcfcf] bg-[#e8e8e8]"><svg width="13" height="13" viewBox="0 0 13 13" fill="none"><rect x=".5" y=".5" width="12" height="12" stroke="#888" strokeDasharray="2 2" /><path d="M5 4l4 4H7l1 3-1 .5-1-3-1 1z" fill="#bbb" /></svg></div>
                  <div className="flex size-[19px] items-center justify-center border border-[#cfcfcf] bg-[#e8e8e8]"><svg width="13" height="13" viewBox="0 0 13 13" fill="none"><rect x=".5" y=".5" width="12" height="12" stroke="#888" strokeDasharray="2 2" /><text x="6.5" y="9.5" textAnchor="middle" fontSize="7" fill="#888" fontFamily="Liberation Sans">A</text></svg></div>
                  <div className="ml-[20px] flex size-[19px] items-center justify-center border border-[#cfcfcf] bg-[#efefef]"><div className="h-[4px] w-[12px] rounded-[2px] bg-[#adadad]" /></div>
                </>} />
              <TreeRow indent={23} icon={<Floor />} w={12} text="2" right={<Plus />} />
              <TreeRow indent={23} icon={<Floor />} w={12} text="3" right={<Plus />} />
            </div>
            <div className="h-[56px] shrink-0 border-t border-[#dcdcdc] px-[5px]">
              <div className="h-[24px] pt-[2px] text-[13.2px] leading-[20px] text-[#333]">Find</div>
              <div className="h-[26px] w-[282px] border border-[#c6c6c6] bg-white" />
            </div>
          </div>
          <div className="flex h-[31px] shrink-0 items-center pl-[2px] pt-[10px]">
            <svg width="17" height="20" viewBox="0 0 17 20" fill="none"><rect x="1" y="2" width="12" height="17" rx="1" fill="#f4f4f4" stroke="#666" strokeWidth="1.2" /><rect x="4" y="0.5" width="6" height="3" fill="#888" /><circle cx="12" cy="15" r="4.5" fill="#e33" /><path d="M10 13l4 4M14 13l-4 4" stroke="#fff" /></svg>
            <span className="ml-[4px] text-[13.2px] text-[#555]">Diagnostics</span>
            <span className="ml-[1px]"><Pin /></span>
            <span className="ml-[3px]"><Cross s={12} c="#444" /></span>
          </div>
          <div className="h-[7px] w-[122px] bg-[#c6c7c9]" />
        </div>

        {/* Center */}
        <div className="ml-[8px] flex h-[777px] w-[925px] shrink-0 flex-col">
          <div className="flex h-[29px] shrink-0">
            <Tab w={140} pl={6} text="General data" icon={<svg width="18" height="20" viewBox="0 0 18 20"><rect x="1" y="1" width="14" height="18" fill="#f6f6f6" stroke="#aaa" /><path d="M3 4h9M3 15h9" stroke="#aaa" /><path d="M5 8h10l2 3-2 2H6z" fill="#a85c32" /></svg>} />
            <Tab w={120} pl={7} active close text="2D editor" icon={<Pen2D />} />
            <Tab w={117} pl={7} text="3D view" icon={<Pen2D />} />
            <Tab w={105} pl={0} text="Results" icon={<svg width="18" height="20" viewBox="0 0 18 20" fill="none"><rect x="3" y="1" width="13" height="16" fill="#f6f6f6" stroke="#bbb" /><circle cx="9" cy="10" r="5" fill="#d8e8f2" stroke="#6e8ca3" /><path d="M5 14l-4 5" stroke="#e08a28" strokeWidth="2" /></svg>} />
            <Tab w={115} pl={0} text="Printouts" icon={<svg width="20" height="18" viewBox="0 0 20 18"><rect x="5" y="1" width="10" height="6" fill="#f4f4f4" stroke="#888" /><rect x="1" y="7" width="18" height="7" rx="1.5" fill="#66778c" /><rect x="4" y="14" width="12" height="3" fill="#f4f4f4" stroke="#888" /><path d="M6 10h3" stroke="#62d062" strokeWidth="1.5" /></svg>} />
            <Tab w={200} pl={0} text="Material lists processing" icon={<svg width="20" height="20" viewBox="0 0 20 20" fill="none"><path d="M1 4h3l2 10h11l2-7H5" stroke="#888" strokeWidth="1.3" /><circle cx="8" cy="17" r="1.5" fill="#555" /><circle cx="16" cy="17" r="1.5" fill="#555" /><path d="M7 5h5V2l5 3.5L12 9V7H7z" fill="#e33" /></svg>} />
          </div>
          <div className="flex h-[29px] shrink-0">
            <div className="flex w-[30px] flex-col items-center bg-[#e9e9e9]">
              <svg width="20" height="13" viewBox="0 0 20 13" fill="none" className="mt-[1px]"><path d="M3 1v11M1 3.500l2-2.500 2 2.500M1 9.500L3 12l2-2.500" stroke="#444" /><path d="M3 3h16" stroke="#444" strokeDasharray="1.5 2.5" strokeWidth="2" /></svg>
              <span className="text-[12px] leading-[14px] text-[#444]">88</span>
            </div>
            <div className="flex-1 bg-[#ffc600]"><Ruler /></div>
          </div>
          <div className="flex h-[665px] shrink-0">
            <div className="w-[30px] shrink-0 bg-[#ffc600] pl-px"><VRuler /></div>
            <div className="relative flex-1 bg-white"><Plan /></div>
          </div>
          <div className="flex h-[26px] shrink-0 items-stretch gap-[2px] border-t border-[#dcdcdc] pb-px pl-px">
            <div className="flex w-[20px] items-center justify-center border-b-2 border-[#c8c8c8] bg-[#e4e5e7]">
              <svg width="12" height="16" viewBox="0 0 12 16"><path d="M6 1l5 6H8v8H4V7H1z" fill="#2a86dc" stroke="#1258a6" strokeWidth=".7" /></svg>
            </div>
            <div className="flex w-[19px] items-center justify-center border-b-2 border-[#c8c8c8] bg-[#e4e5e7]">
              <svg width="12" height="16" viewBox="0 0 12 16"><path d="M6 15l5-6H8V1H4v8H1z" fill="#2a86dc" stroke="#1258a6" strokeWidth=".7" /></svg>
            </div>
            <div className="ml-px flex w-[145px] items-center border-b-2 border-r-2 border-[#c8c8c8] bg-[#e2e3e5]">
              <span className="ml-[47px]"><Floor /></span>
              <span className="ml-[6px] pt-px text-[13.2px] text-[#444]">1</span>
              <span className="ml-auto mr-[6px]"><ChevD /></span>
            </div>
          </div>
          <div className="flex h-[28px] shrink-0 items-center bg-[#0479cf] pt-px">
            <svg width="19" height="17" viewBox="0 0 19 17" className="ml-[11px]"><path d="M9.5 1L18 16H1z" fill="#f7e58e" stroke="#e0b93c" /><rect x="8.7" y="6" width="1.6" height="5.5" fill="#444" /><rect x="8.7" y="12.5" width="1.6" height="1.6" fill="#444" /></svg>
            <span className="ml-[24px] text-[13.2px] text-[#e6f2fb]">11,809; 4,962</span>
          </div>
        </div>

        {/* Properties panel */}
        <div className="relative ml-[8px] flex h-[781px] w-[490px] shrink-0 flex-col border border-[#dedede]">
          <div className="relative flex h-[36px] shrink-0 items-center justify-center border-b-2 border-[#dcdcdc] pb-[7px] pl-[20px] text-[13.2px] text-[#333]">
            <span className="absolute left-[6px] top-[17px]"><Chev c="#333" w={10} /></span>
            1* Building unit
          </div>
          <div className="flex flex-1 flex-col bg-white">
            <div className="flex flex-1">
              <div className="w-[468px] shrink-0">
                <Section t="Component identification" h={26} />
                <PRow label="Name" value="01" blue chev mon />
                <PRow label="Description" value="" chev />
                <Section t="Technical data" h={25} />
                <PRow label="Temperatures of adjacent spaces e" value="" box />
                <Section t="H&E" h={24} />
                <PRow label="Ventilation type" value="Supply and exhaust" blue chev mon />
                <PRow label={<>Always include n<sub>min</sub></>} value="" blue box mon />
                <PRow label={<>n<sub>50</sub></>} value="4,0" blue unit="1/h" mon />
                <PRow label="Calculate for building unit" value="" box />
                <PRow labelHi label={<>θ<sub>su</sub></>} value={<span className="bg-[#94c4ea] text-[#2a3a5c]">20,00</span>} unit="°C" hi />
                <PRow label="Manner of determining flow rates" value="Determined from arrangement" chev />
                <PRow label="Building sheltering class" value="No sheltering" blue chev mon />
              </div>
              <div className="flex flex-1 flex-col items-center justify-between pb-[10px] pt-[9px]">
                <svg width="12" height="7" viewBox="0 0 12 7" fill="none"><path d="M1 6l5-5 5 5" stroke="#aaa" strokeWidth="1.4" /></svg>
                <svg width="12" height="7" viewBox="0 0 12 7" fill="none"><path d="M1 1l5 5 5-5" stroke="#aaa" strokeWidth="1.4" /></svg>
              </div>
            </div>
            <div className="h-[87px] shrink-0 border-t-2 border-[#e0e0e0] bg-[#f0f0f0] pl-[14px]">
              <div className="mt-[7px] text-[13.2px] font-bold leading-5 text-[#333]">θ<sub>su</sub></div>
              <div className="mt-[6px] text-[13.2px] leading-5 text-[#333]">Default temperature of supplied air</div>
            </div>
          </div>
          <div className="absolute left-[15px] top-[304px] h-[33px] w-[458px] rounded-[10px] border-[3px] border-[#ee1c25]" />
        </div>

        {/* Right strip */}
        <div className="flex flex-1 justify-end">
          <div className="mr-[3px] flex w-[20px] flex-col items-center">
            <svg width="17" height="16" viewBox="0 0 17 16" fill="none" className="mt-[2px]"><rect x="1" y="1" width="15" height="8" fill="#f4f4f4" stroke="#bbb" /><path d="M4 4h9" stroke="#c33" strokeWidth="2" strokeDasharray="2 1" /><path d="M2 5l7 8 2-2-7-8z" fill="#f3c23c" stroke="#c58a17" strokeWidth=".6" /></svg>
            <div className="mt-[7px] size-[5px] rounded-full bg-[#444]" />
            <svg width="9" height="8" viewBox="0 0 9 8" fill="none" className="mt-[4px]"><path d="M1 1h7v2a3.5 4 0 0 1-7 0z" stroke="#555" /></svg>
            <div className="mt-[3px] text-[13.2px] leading-[16px] text-[#444] [writing-mode:vertical-rl]">Data table</div>
            <div className="mt-[1px]"><Pin r /></div>
            <div className="mt-[3px]"><Cross s={12} c="#444" /></div>
          </div>
          <div className="h-[127px] w-[7px] bg-[#c6c7c9]" />
        </div>
      </div>

      {/* Bottom line */}
      <div className="flex h-[2px] shrink-0">
        <div className="w-[56px] bg-[#333]" />
        <div className="w-[404px] bg-[#c8c8c8]" />
        <div className="flex-1 bg-[#2a2a2a]" />
      </div>
    </div>
  );
}
